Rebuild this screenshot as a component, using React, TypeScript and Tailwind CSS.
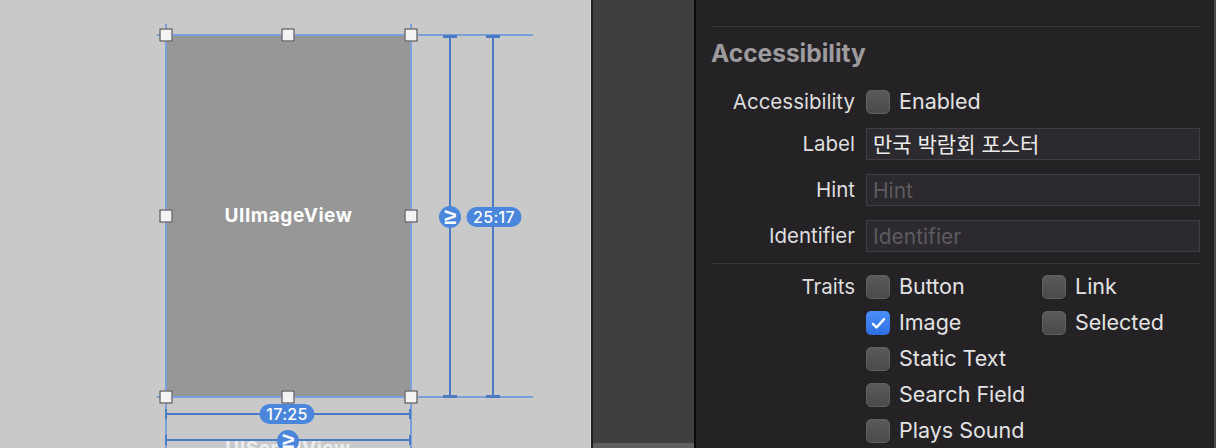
import type { ReactNode } from "react";

const font = "font-['Inter','Noto_Sans_CJK_KR',sans-serif]";

// selection handle, centred on a point of the canvas
function Handle({ x, y }: { x: number; y: number }) {
  return (
    <span
      className="absolute h-[13px] w-[13px] -translate-x-1/2 -translate-y-1/2 border-[1.5px] border-[#353535] bg-[#f3f3f3]"
      style={{ left: x, top: y }}
    />
  );
}

function Pill({ x, y, children }: { x: number; y: number; children: ReactNode }) {
  return (
    <span
      className="absolute flex h-[20px] w-[55px] -translate-x-1/2 -translate-y-1/2 items-center justify-center rounded-full bg-[#4a86dc] text-[16px] font-medium leading-none tracking-[0.02em] text-white"
      style={{ left: x, top: y }}
    >
      {children}
    </span>
  );
}

function GreaterBadge({ x, y }: { x: number; y: number }) {
  return (
    <span
      className="absolute flex h-[22px] w-[22px] -translate-x-1/2 -translate-y-1/2 items-center justify-center rounded-full bg-[#4a86dc] pb-px font-['Liberation_Sans',sans-serif] text-[22px] font-bold leading-none text-white"
      style={{ left: x, top: y }}
    >
      ≥
    </span>
  );
}

function Canvas() {
  const handles = [
    [166, 35], [288, 35], [411, 35],
    [166, 216], [411, 216],
    [166, 397], [288, 397], [411, 397],
  ];
  return (
    <div className="relative w-[591px] shrink-0 overflow-hidden border-r border-[#dadada] bg-[#c9c9c9]">
      {/* image view */}
      <div className="absolute left-[166px] top-[35px] flex h-[362px] w-[245px] items-center justify-center bg-[#979797]">
        <span className="text-[19px] font-bold tracking-[0.03em] text-white">UIImageView</span>
      </div>
      <span className="absolute left-[220px] top-[435px] w-[136px] text-center text-[19px] font-bold tracking-[0.03em] text-[#eeeeee]">
        UIScrollView
      </span>

      {/* alignment guides */}
      <span className="absolute left-[157px] top-[34px] h-[2px] w-[376px] bg-[#7aa0d8]" />
      <span className="absolute left-[157px] top-[396px] h-[2px] w-[376px] bg-[#7aa0d8]" />
      <span className="absolute left-[165px] top-[24px] h-[424px] w-[2px] bg-[#7aa0d8]" />
      <span className="absolute left-[410px] top-[24px] h-[424px] w-[2px] bg-[#7aa0d8]" />

      {/* height constraints */}
      <span className="absolute left-[449px] top-[36px] h-[362px] w-[2px] bg-[#4a7cc6]" />
      <span className="absolute left-[443px] top-[35px] h-[3px] w-[14px] bg-[#4a7cc6]" />
      <span className="absolute left-[443px] top-[395px] h-[3px] w-[14px] bg-[#4a7cc6]" />
      <span className="absolute left-[492px] top-[36px] h-[362px] w-[2px] bg-[#4a7cc6]" />
      <span className="absolute left-[486px] top-[35px] h-[3px] w-[14px] bg-[#4a7cc6]" />
      <span className="absolute left-[486px] top-[395px] h-[3px] w-[14px] bg-[#4a7cc6]" />

      {/* width constraints */}
      <span className="absolute left-[166px] top-[413px] h-[2px] w-[245px] bg-[#4a7cc6]" />
      <span className="absolute left-[165px] top-[409px] h-[10px] w-[2px] bg-[#4a7cc6]" />
      <span className="absolute left-[409px] top-[409px] h-[10px] w-[2px] bg-[#4a7cc6]" />
      <span className="absolute left-[166px] top-[439px] h-[2px] w-[245px] bg-[#4a7cc6]" />
      <span className="absolute left-[165px] top-[435px] h-[10px] w-[2px] bg-[#4a7cc6]" />
      <span className="absolute left-[409px] top-[435px] h-[10px] w-[2px] bg-[#4a7cc6]" />

      {handles.map(([x, y]) => (
        <Handle key={`${x}-${y}`} x={x} y={y} />
      ))}

      <GreaterBadge x={450} y={217} />
      <Pill x={494} y={217}>25:17</Pill>
      <Pill x={287} y={414}>17:25</Pill>
      <GreaterBadge x={288} y={441} />
    </div>
  );
}

function Check({ on = false }: { on?: boolean }) {
  if (on) {
    return (
      <span className="flex h-6 w-6 shrink-0 items-center justify-center rounded-[5px] bg-linear-to-b from-[#4a8ff8] to-[#2e6fe0]">
        <svg viewBox="0 0 24 24" className="h-[19px] w-[19px]" fill="none" stroke="white" strokeWidth={3} strokeLinecap="round" strokeLinejoin="round">
          <path d="M5 12.5l4.5 4.5L19 6.5" />
        </svg>
      </span>
    );
  }
  return <span className="h-6 w-6 shrink-0 rounded-[5px] border border-[#605f61] bg-linear-to-b from-[#5a595b] to-[#4a494b]" />;
}

function Option({ label, on }: { label: string; on?: boolean }) {
  return (
    <div className="flex h-6 items-center gap-[9px] text-[21.5px] text-[#e2e2e2]">
      <Check on={on} />
      <span>{label}</span>
    </div>
  );
}

function Field({ value, placeholder }: { value?: string; placeholder: string }) {
  return (
    <div className="flex h-8 flex-1 items-center border border-[#403e42] bg-[#2c2a2e] px-[6px]">
      {value ? <span className="text-[#ececec]">{value}</span> : <span className="text-[#5d5b5f]">{placeholder}</span>}
    </div>
  );
}

function Row({ label, children, className = "" }: { label: string; children: ReactNode; className?: string }) {
  return (
    <div className={`flex items-center gap-[11px] ${className}`}>
      <span className="w-[143px] shrink-0 text-right text-[20.5px]">{label}</span>
      {children}
    </div>
  );
}

function Inspector() {
  const traits: [string, boolean, string | null][] = [
    ["Button", false, "Link"],
    ["Image", true, "Selected"],
    ["Static Text", false, null],
    ["Search Field", false, null],
    ["Plays Sound", false, null],
  ];
  return (
    <div className="flex-1 bg-[#252226] pl-4 pr-[14px] pt-[26px] text-[21px] leading-none text-[#dedede]">
      <div className="h-px bg-[#3b383c]" />
      <h2 className="mt-[10px] -ml-px text-[24.5px] font-bold leading-[32px] text-[#9d9b9e]">Accessibility</h2>

      <Row label="Accessibility" className="mt-[21px] h-6">
        <Option label="Enabled" />
      </Row>
      <Row label="Label" className="mt-[14px]">
        <Field value="만국 박람회 포스터" placeholder="Label" />
      </Row>
      <Row label="Hint" className="mt-[14px]">
        <Field placeholder="Hint" />
      </Row>
      <Row label="Identifier" className="mt-[14px]">
        <Field placeholder="Identifier" />
      </Row>

      <div className="mt-[11px] h-px bg-[#3b383c]" />

      <div className="mt-[11px] grid grid-cols-[143px_165px_auto] gap-x-[11px] gap-y-3">
        {traits.map(([a, on, b], i) => (
          <div key={a} className="contents">
            <span className="flex h-6 items-center justify-end text-[20.5px]">{i === 0 ? "Traits" : ""}</span>
            <Option label={a} on={on} />
            {b ? <Option label={b} /> : <span />}
          </div>
        ))}
      </div>
    </div>
  );
}

export default function App() {
  return (
    <div className={`flex h-[448px] w-[1216px] overflow-hidden ${font}`}>
      <Canvas />
      <div className="w-[2px] shrink-0 bg-[#1f1f1f]" />
      <div className="flex w-[101px] shrink-0 flex-col bg-[#3f3f3f]">
        <div className="flex-1" />
        <div className="h-[5px] bg-[#5f5f5f]" />
      </div>
      <div className="w-[2px] shrink-0 bg-[#0c0c0c]" />
      <Inspector />
      <div className="w-[2px] shrink-0 bg-[#4b4a4c]" />
    </div>
  );
}
